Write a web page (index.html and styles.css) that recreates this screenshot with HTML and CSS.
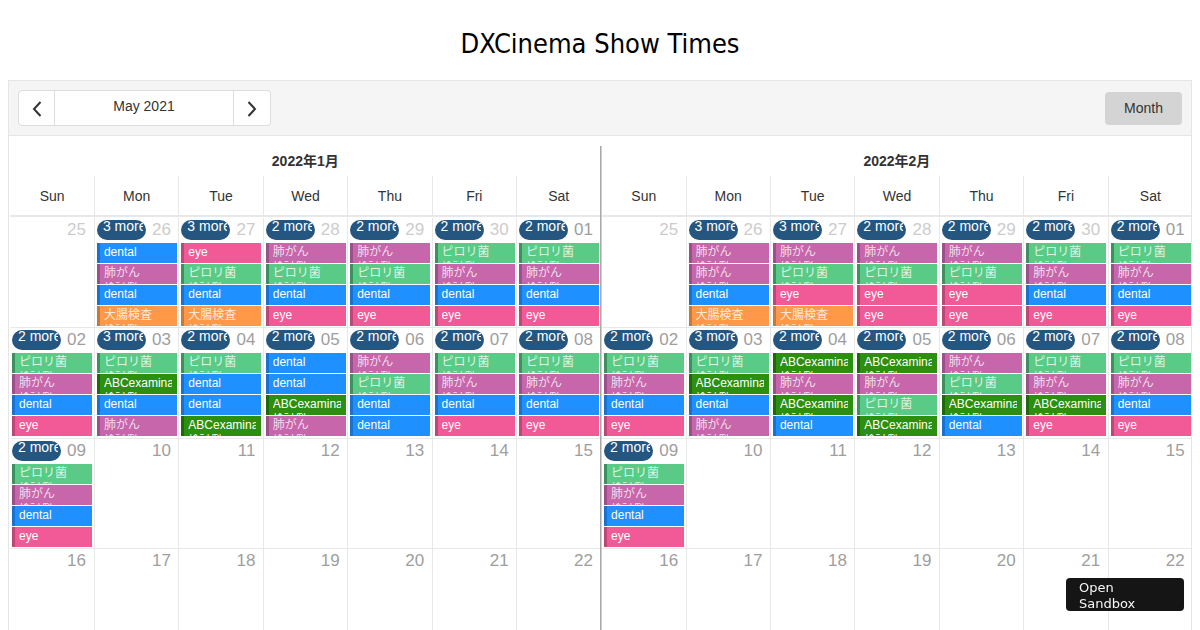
FILE: index.html
```html
<!DOCTYPE html>
<html lang="en">
<head>
<meta charset="utf-8">
<title>DXCinema Show Times</title>
<link rel="stylesheet" href="styles.css">
</head>
<body>
<h1 class="title">DXCinema Show Times</h1>
<div class="scheduler">
  <div class="toolbar">
    <div class="nav">
      <button class="nav-btn nav-prev"><svg width="12" height="18" viewBox="0 0 12 18"><path d="M9.5 2 3 9l6.5 7" fill="none" stroke="#333" stroke-width="2"/></svg></button>
      <div class="nav-label">May 2021</div>
      <button class="nav-btn"><svg width="12" height="18" viewBox="0 0 12 18"><path d="M2.5 2 9 9l-6.5 7" fill="none" stroke="#333" stroke-width="2"/></svg></button>
    </div>
    <button class="view-btn">Month</button>
  </div>
  <div class="months">
    <section class="month">
      <div class="month-name">2022年1月</div>
      <div class="weekdays"><div>Sun</div><div>Mon</div><div>Tue</div><div>Wed</div><div>Thu</div><div>Fri</div><div>Sat</div></div>
      <div class="grid">
        <div class="cell"><div class="cell-head"><span class="num past">25</span></div></div>
        <div class="cell"><div class="cell-head"><span class="more"><span>3 more</span></span><span class="num past">26</span></div>
          <div class="appt dental"><p>dental</p></div><div class="appt lung"><p>肺がん</p><p class="sub">検討例 1 ●■</p></div><div class="appt dental"><p>dental</p></div><div class="appt colon"><p>大腸検査</p><p class="sub">検討例 1 ●■</p></div></div>
        <div class="cell"><div class="cell-head"><span class="more"><span>3 more</span></span><span class="num past">27</span></div>
          <div class="appt eye"><p>eye</p></div><div class="appt pylori"><p>ピロリ菌</p><p class="sub">検討例 1 ●■</p></div><div class="appt dental"><p>dental</p></div><div class="appt colon"><p>大腸検査</p><p class="sub">検討例 1 ●■</p></div></div>
        <div class="cell"><div class="cell-head"><span class="more"><span>2 more</span></span><span class="num past">28</span></div>
          <div class="appt lung"><p>肺がん</p><p class="sub">検討例 1 ●■</p></div><div class="appt pylori"><p>ピロリ菌</p><p class="sub">検討例 1 ●■</p></div><div class="appt dental"><p>dental</p></div><div class="appt eye"><p>eye</p></div></div>
        <div class="cell"><div class="cell-head"><span class="more"><span>2 more</span></span><span class="num past">29</span></div>
          <div class="appt lung"><p>肺がん</p><p class="sub">検討例 1 ●■</p></div><div class="appt pylori"><p>ピロリ菌</p><p class="sub">検討例 1 ●■</p></div><div class="appt dental"><p>dental</p></div><div class="appt eye"><p>eye</p></div></div>
        <div class="cell"><div class="cell-head"><span class="more"><span>2 more</span></span><span class="num past">30</span></div>
          <div class="appt pylori"><p>ピロリ菌</p><p class="sub">検討例 1 ●■</p></div><div class="appt lung"><p>肺がん</p><p class="sub">検討例 1 ●■</p></div><div class="appt dental"><p>dental</p></div><div class="appt eye"><p>eye</p></div></div>
        <div class="cell"><div class="cell-head"><span class="more"><span>2 more</span></span><span class="num">01</span></div>
          <div class="appt pylori"><p>ピロリ菌</p><p class="sub">検討例 1 ●■</p></div><div class="appt lung"><p>肺がん</p><p class="sub">検討例 1 ●■</p></div><div class="appt dental"><p>dental</p></div><div class="appt eye"><p>eye</p></div></div>

        <div class="cell"><div class="cell-head"><span class="more"><span>2 more</span></span><span class="num">02</span></div>
          <div class="appt pylori"><p>ピロリ菌</p><p class="sub">検討例 1 ●■</p></div><div class="appt lung"><p>肺がん</p><p class="sub">検討例 1 ●■</p></div><div class="appt dental"><p>dental</p></div><div class="appt eye"><p>eye</p></div></div>
        <div class="cell"><div class="cell-head"><span class="more"><span>3 more</span></span><span class="num">03</span></div>
          <div class="appt pylori"><p>ピロリ菌</p><p class="sub">検討例 1 ●■</p></div><div class="appt abc"><p>ABCexamination</p><p class="sub">検討例 1</p></div><div class="appt dental"><p>dental</p></div><div class="appt lung"><p>肺がん</p><p class="sub">検討例 1 ●■</p></div></div>
        <div class="cell"><div class="cell-head"><span class="more"><span>2 more</span></span><span class="num">04</span></div>
          <div class="appt pylori"><p>ピロリ菌</p><p class="sub">検討例 1 ●■</p></div><div class="appt dental"><p>dental</p></div><div class="appt dental"><p>dental</p></div><div class="appt abc"><p>ABCexamination</p><p class="sub">検討例 1</p></div></div>
        <div class="cell"><div class="cell-head"><span class="more"><span>2 more</span></span><span class="num">05</span></div>
          <div class="appt dental"><p>dental</p></div><div class="appt dental"><p>dental</p></div><div class="appt abc"><p>ABCexamination</p><p class="sub">検討例 1</p></div><div class="appt lung"><p>肺がん</p><p class="sub">検討例 1 ●■</p></div></div>
        <div class="cell"><div class="cell-head"><span class="more"><span>2 more</span></span><span class="num">06</span></div>
          <div class="appt lung"><p>肺がん</p><p class="sub">検討例 1 ●■</p></div><div class="appt pylori"><p>ピロリ菌</p><p class="sub">検討例 1 ●■</p></div><div class="appt dental"><p>dental</p></div><div class="appt dental"><p>dental</p></div></div>
        <div class="cell"><div class="cell-head"><span class="more"><span>2 more</span></span><span class="num">07</span></div>
          <div class="appt pylori"><p>ピロリ菌</p><p class="sub">検討例 1 ●■</p></div><div class="appt lung"><p>肺がん</p><p class="sub">検討例 1 ●■</p></div><div class="appt dental"><p>dental</p></div><div class="appt eye"><p>eye</p></div></div>
        <div class="cell"><div class="cell-head"><span class="more"><span>2 more</span></span><span class="num">08</span></div>
          <div class="appt pylori"><p>ピロリ菌</p><p class="sub">検討例 1 ●■</p></div><div class="appt lung"><p>肺がん</p><p class="sub">検討例 1 ●■</p></div><div class="appt dental"><p>dental</p></div><div class="appt eye"><p>eye</p></div></div>

        <div class="cell"><div class="cell-head"><span class="more"><span>2 more</span></span><span class="num">09</span></div>
          <div class="appt pylori"><p>ピロリ菌</p><p class="sub">検討例 1 ●■</p></div><div class="appt lung"><p>肺がん</p><p class="sub">検討例 1 ●■</p></div><div class="appt dental"><p>dental</p></div><div class="appt eye"><p>eye</p></div></div>
        <div class="cell"><div class="cell-head"><span class="num">10</span></div></div>
        <div class="cell"><div class="cell-head"><span class="num">11</span></div></div>
        <div class="cell"><div class="cell-head"><span class="num">12</span></div></div>
        <div class="cell"><div class="cell-head"><span class="num">13</span></div></div>
        <div class="cell"><div class="cell-head"><span class="num">14</span></div></div>
        <div class="cell"><div class="cell-head"><span class="num">15</span></div></div>

        <div class="cell"><div class="cell-head"><span class="num">16</span></div></div>
        <div class="cell"><div class="cell-head"><span class="num">17</span></div></div>
        <div class="cell"><div class="cell-head"><span class="num">18</span></div></div>
        <div class="cell"><div class="cell-head"><span class="num">19</span></div></div>
        <div class="cell"><div class="cell-head"><span class="num">20</span></div></div>
        <div class="cell"><div class="cell-head"><span class="num">21</span></div></div>
        <div class="cell"><div class="cell-head"><span class="num">22</span></div></div>
      </div>
    </section>
    <section class="month">
      <div class="month-name">2022年2月</div>
      <div class="weekdays"><div>Sun</div><div>Mon</div><div>Tue</div><div>Wed</div><div>Thu</div><div>Fri</div><div>Sat</div></div>
      <div class="grid">
        <div class="cell"><div class="cell-head"><span class="num past">25</span></div></div>
        <div class="cell"><div class="cell-head"><span class="more"><span>3 more</span></span><span class="num past">26</span></div>
          <div class="appt lung"><p>肺がん</p><p class="sub">検討例 1</p></div><div class="appt lung"><p>肺がん</p><p class="sub">検討例 1 ●■</p></div><div class="appt dental"><p>dental</p></div><div class="appt colon"><p>大腸検査</p><p class="sub">検討例 1 ●■</p></div></div>
        <div class="cell"><div class="cell-head"><span class="more"><span>3 more</span></span><span class="num past">27</span></div>
          <div class="appt lung"><p>肺がん</p><p class="sub">検討例 1 ●■</p></div><div class="appt pylori"><p>ピロリ菌</p><p class="sub">検討例 1 ●■</p></div><div class="appt eye"><p>eye</p></div><div class="appt colon"><p>大腸検査</p><p class="sub">検討例 1 ●■</p></div></div>
        <div class="cell"><div class="cell-head"><span class="more"><span>2 more</span></span><span class="num past">28</span></div>
          <div class="appt lung"><p>肺がん</p><p class="sub">検討例 1 ●■</p></div><div class="appt pylori"><p>ピロリ菌</p><p class="sub">検討例 1 ●■</p></div><div class="appt eye"><p>eye</p></div><div class="appt eye"><p>eye</p></div></div>
        <div class="cell"><div class="cell-head"><span class="more"><span>2 more</span></span><span class="num past">29</span></div>
          <div class="appt lung"><p>肺がん</p><p class="sub">検討例 1 ●■</p></div><div class="appt pylori"><p>ピロリ菌</p><p class="sub">検討例 1 ●■</p></div><div class="appt eye"><p>eye</p></div><div class="appt eye"><p>eye</p></div></div>
        <div class="cell"><div class="cell-head"><span class="more"><span>2 more</span></span><span class="num past">30</span></div>
          <div class="appt pylori"><p>ピロリ菌</p><p class="sub">検討例 1 ●■</p></div><div class="appt lung"><p>肺がん</p><p class="sub">検討例 1 ●■</p></div><div class="appt dental"><p>dental</p></div><div class="appt eye"><p>eye</p></div></div>
        <div class="cell"><div class="cell-head"><span class="more"><span>2 more</span></span><span class="num">01</span></div>
          <div class="appt pylori"><p>ピロリ菌</p><p class="sub">検討例 1 ●■</p></div><div class="appt lung"><p>肺がん</p><p class="sub">検討例 1 ●■</p></div><div class="appt dental"><p>dental</p></div><div class="appt eye"><p>eye</p></div></div>

        <div class="cell"><div class="cell-head"><span class="more"><span>2 more</span></span><span class="num">02</span></div>
          <div class="appt pylori"><p>ピロリ菌</p><p class="sub">検討例 1 ●■</p></div><div class="appt lung"><p>肺がん</p><p class="sub">検討例 1 ●■</p></div><div class="appt dental"><p>dental</p></div><div class="appt eye"><p>eye</p></div></div>
        <div class="cell"><div class="cell-head"><span class="more"><span>3 more</span></span><span class="num">03</span></div>
          <div class="appt pylori"><p>ピロリ菌</p><p class="sub">検討例 1 ●■</p></div><div class="appt abc"><p>ABCexamination</p><p class="sub">検討例 1</p></div><div class="appt dental"><p>dental</p></div><div class="appt lung"><p>肺がん</p><p class="sub">検討例 1 ●■</p></div></div>
        <div class="cell"><div class="cell-head"><span class="more"><span>2 more</span></span><span class="num">04</span></div>
          <div class="appt abc"><p>ABCexamination</p><p class="sub">検討例 1</p></div><div class="appt lung"><p>肺がん</p><p class="sub">検討例 1 ●■</p></div><div class="appt abc"><p>ABCexamination</p><p class="sub">検討例 1 ●■</p></div><div class="appt dental"><p>dental</p></div></div>
        <div class="cell"><div class="cell-head"><span class="more"><span>2 more</span></span><span class="num">05</span></div>
          <div class="appt abc"><p>ABCexamination</p><p class="sub">検討例 1</p></div><div class="appt lung"><p>肺がん</p><p class="sub">検討例 1 ●■</p></div><div class="appt pylori"><p>ピロリ菌</p><p class="sub">検討例 1 ●■</p></div><div class="appt abc"><p>ABCexamination</p><p class="sub">検討例 1</p></div></div>
        <div class="cell"><div class="cell-head"><span class="more"><span>2 more</span></span><span class="num">06</span></div>
          <div class="appt lung"><p>肺がん</p><p class="sub">検討例 1 ●■</p></div><div class="appt pylori"><p>ピロリ菌</p><p class="sub">検討例 1 ●■</p></div><div class="appt abc"><p>ABCexamination</p><p class="sub">検討例 1</p></div><div class="appt dental"><p>dental</p></div></div>
        <div class="cell"><div class="cell-head"><span class="more"><span>2 more</span></span><span class="num">07</span></div>
          <div class="appt pylori"><p>ピロリ菌</p><p class="sub">検討例 1 ●■</p></div><div class="appt lung"><p>肺がん</p><p class="sub">検討例 1 ●■</p></div><div class="appt abc"><p>ABCexamination</p><p class="sub">検討例 1 ●■</p></div><div class="appt eye"><p>eye</p></div></div>
        <div class="cell"><div class="cell-head"><span class="more"><span>2 more</span></span><span class="num">08</span></div>
          <div class="appt pylori"><p>ピロリ菌</p><p class="sub">検討例 1 ●■</p></div><div class="appt lung"><p>肺がん</p><p class="sub">検討例 1 ●■</p></div><div class="appt dental"><p>dental</p></div><div class="appt eye"><p>eye</p></div></div>

        <div class="cell"><div class="cell-head"><span class="more"><span>2 more</span></span><span class="num">09</span></div>
          <div class="appt pylori"><p>ピロリ菌</p><p class="sub">検討例 1 ●■</p></div><div class="appt lung"><p>肺がん</p><p class="sub">検討例 1 ●■</p></div><div class="appt dental"><p>dental</p></div><div class="appt eye"><p>eye</p></div></div>
        <div class="cell"><div class="cell-head"><span class="num">10</span></div></div>
        <div class="cell"><div class="cell-head"><span class="num">11</span></div></div>
        <div class="cell"><div class="cell-head"><span class="num">12</span></div></div>
        <div class="cell"><div class="cell-head"><span class="num">13</span></div></div>
        <div class="cell"><div class="cell-head"><span class="num">14</span></div></div>
        <div class="cell"><div class="cell-head"><span class="num">15</span></div></div>

        <div class="cell"><div class="cell-head"><span class="num">16</span></div></div>
        <div class="cell"><div class="cell-head"><span class="num">17</span></div></div>
        <div class="cell"><div class="cell-head"><span class="num">18</span></div></div>
        <div class="cell"><div class="cell-head"><span class="num">19</span></div></div>
        <div class="cell"><div class="cell-head"><span class="num">20</span></div></div>
        <div class="cell"><div class="cell-head"><span class="num">21</span></div></div>
        <div class="cell"><div class="cell-head"><span class="num">22</span></div></div>
      </div>
    </section>
  </div>
</div>
<a class="sandbox-link">Open<br>Sandbox</a>
</body>
</html>
```
FILE: styles.css
```css
* { box-sizing: border-box; }
html, body { height: 630px; overflow: hidden; }
body {
  margin: 0;
  padding: 0 8px;
  background: #fff;
  color: #333;
  font-family: "Liberation Sans", "Noto Sans CJK JP", sans-serif;
  font-size: 14px;
}
p { margin: 0; }
.title {
  margin: 0;
  height: 80px;
  padding-top: 27px;
  text-align: center;
  font-family: "DejaVu Sans Condensed", "DejaVu Sans", sans-serif;
  font-size: 27px;
  line-height: 34px;
  font-weight: 400;
  color: #000;
}
.scheduler {
  width: 1184px;
  height: 600px;
  border: 1px solid #e5e5e5;
  overflow: hidden;
}
.toolbar {
  height: 55px;
  padding: 9px 9px 0;
  display: flex;
  justify-content: space-between;
  align-items: flex-start;
  background: #f5f5f5;
  border-bottom: 1px solid #e5e5e5;
}
.nav {
  display: flex;
  width: 253px;
  height: 36px;
  background: #fff;
  border: 1px solid #ddd;
  border-radius: 4px;
}
.nav-btn {
  width: 36px;
  padding: 2px 0 0;
  border: 0;
  background: transparent;
  display: flex;
  align-items: center;
  justify-content: center;
}
.nav-prev { width: 35px; }
.nav-label {
  flex: 1;
  text-align: center;
  line-height: 30px;
  border-left: 1px solid #ddd;
  border-right: 1px solid #ddd;
}
.view-btn {
  width: 77px;
  height: 33px;
  margin-top: 2px;
  padding: 0 0 2px;
  border: 0;
  border-radius: 4px;
  background: #d4d4d4;
  color: #333;
  font: 14px "Liberation Sans", sans-serif;
}
.months {
  display: flex;
  padding: 10px 0 0 0.5px;
}
.month {
  position: relative;
  flex: none;
  width: 591.6px;
}
.month + .month::before {
  content: "";
  position: absolute;
  left: -1px;
  top: 0;
  bottom: 0;
  width: 1px;
  background: #a8a8a8;
  box-shadow: 1px 0 0 #d0d0d0;
}
.month-name {
  height: 30px;
  text-align: center;
  font-weight: 700;
  line-height: 30px;
}
.weekdays, .grid {
  display: grid;
  grid-template-columns: repeat(7, 84.43px);
}
.weekdays {
  height: 41px;
  border-bottom: 2px solid #e8e8e8;
}
.weekdays > div {
  text-align: center;
  line-height: 40px;
  border-left: 1px solid #e8e8e8;
}
.weekdays > div:first-child { border-left-color: transparent; }
.grid { grid-auto-rows: 110.33px; }
.cell {
  padding: 2px 0 0 2px;
  border-left: 1px solid #e8e8e8;
  border-top: 1px solid #e8e8e8;
  overflow: hidden;
}
.cell:nth-child(-n+7) { border-top-color: transparent; }
.cell:nth-child(7n+1) { border-left-color: transparent; }
.month:first-child .cell:nth-child(7n+1) { padding-left: 1.5px; }
.cell-head {
  display: flex;
  width: 80px;
  height: 23px;
  align-items: flex-start;
}
.more {
  width: 49px;
  height: 20px;
  padding: 0 3px 0 6px;
  flex: none;
  border-radius: 10px;
  background: #24567f;
  color: #fff;
  line-height: 12px;
}
.more > span {
  display: block;
  height: 20px;
  overflow: hidden;
  white-space: nowrap;
}
.num {
  margin-left: auto;
  padding-right: 6px;
  font-size: 17px;
  line-height: 20px;
  color: #9e9e9e;
}
.num.past { color: #ccc; }
.appt {
  width: 80px;
  height: 20px;
  margin-bottom: 1px;
  padding-left: 4px;
  overflow: hidden;
  color: #fff;
  font-size: 12px;
  line-height: 18px;
  white-space: nowrap;
  border-left: 3px solid;
}
.appt p:first-child { overflow: hidden; margin-right: 5px; }
.sub { font-size: 11px; line-height: 12px; }
.lung p, .pylori p, .colon p { color: rgba(255, 255, 255, 0.8); }
.dental { background: #1e90ff; border-left-color: #1a72cb; }
.eye { background: #f25a97; border-left-color: #b94a78; }
.lung { background: #c766ab; border-left-color: #99518a; }
.pylori { background: #59cb86; border-left-color: #3f8f60; }
.colon { background: #ff9947; border-left-color: #c27a3d; }
.abc { background: #2c8f10; border-left-color: #1f680d; }
.sandbox-link {
  position: fixed;
  left: 1066px;
  top: 578px;
  width: 118px;
  height: 33px;
  padding: 2px 13px;
  border-radius: 4px;
  background: #151515;
  color: #f5f5f5;
  font-family: "DejaVu Sans", sans-serif;
  font-size: 13px;
  line-height: 16px;
}
```
